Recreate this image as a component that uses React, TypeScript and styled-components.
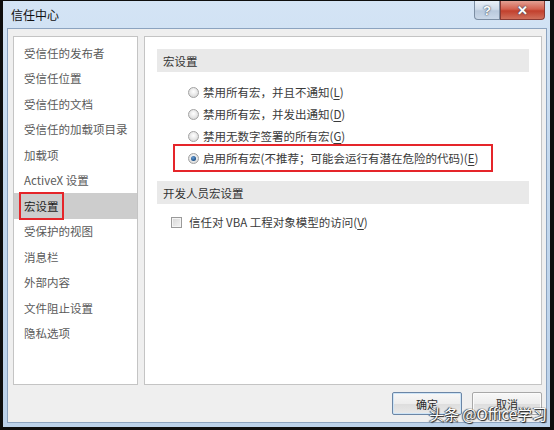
import React from "react";
import styled, { createGlobalStyle } from "styled-components";

const Global = createGlobalStyle`
  html, body {
    margin: 0;
    padding: 0;
    width: 554px;
    height: 430px;
    overflow: hidden;
    background: #111;
  }
  * { box-sizing: border-box; }
`;

const FONT = `"Noto Sans CJK SC", "Noto Sans", "Liberation Sans", sans-serif`;

const Window = styled.div`
  position: relative;
  width: 554px;
  height: 430px;
  display: flex;
  flex-direction: column;
  border-style: solid;
  border-color: #0e0e0e;
  border-width: 1px 4px 3px 3px;
  padding: 0 3px 4px 4px;
  background: linear-gradient(180deg, #d4e4f5 0%, #c3d8ee 40%, #bcd2ea 100%);
  font-family: ${FONT};
`;

const TitleBar = styled.div`
  height: 27px;
  display: flex;
  align-items: flex-start;
  justify-content: space-between;
  padding-left: 4px;
`;

const Title = styled.div`
  font-size: 12px;
  line-height: 27px;
  color: #111;
`;

const Caption = styled.div`
  display: flex;
  margin-right: 2px;
`;

const CapButton = styled.div<{ $close?: boolean }>`
  width: ${(p) => (p.$close ? 45 : 26)}px;
  height: 19px;
  display: flex;
  align-items: center;
  justify-content: center;
  border: 1px solid ${(p) => (p.$close ? "#8a3a33" : "#7c8ea3")};
  border-top: none;
  border-radius: ${(p) => (p.$close ? "0 0 4px 0" : "0 0 0 4px")};
  background: ${(p) =>
    p.$close
      ? "linear-gradient(180deg, #e3a093 0%, #d4614f 45%, #c2402d 55%, #d0705c 100%)"
      : "linear-gradient(180deg, #e9f0f8 0%, #cfdbe9 45%, #b9c9dc 55%, #cad8e8 100%)"};
  color: #fff;
  font-family: "Liberation Sans", sans-serif;
  font-weight: bold;
  font-size: 13px;
  text-shadow: 0 0 2px #3e4e62, 0 0 1px #3e4e62;
`;

const Body = styled.div`
  flex: 1;
  display: flex;
  flex-direction: column;
  border: 1px solid #8ca3bf;
  background: #efefef;
  padding: 7px 4px 0 5px;
`;

const Panels = styled.div`
  height: 349px;
  display: flex;
  gap: 6px;
`;

const NavPanel = styled.div`
  width: 125px;
  background: #fff;
  border: 1px solid #c4c4c4;
  padding-top: 3px;
`;

const NavItem = styled.div<{ $active?: boolean }>`
  height: 25.5px;
  display: flex;
  align-items: stretch;
  padding-left: 10px;
  font-size: 11.5px;
  color: ${(p) => (p.$active ? "#1e1e1e" : "#5a5a5a")};
  background: ${(p) => (p.$active ? "#cdcdcd" : "transparent")};
`;

const NavLabel = styled.span<{ $marked?: boolean }>`
  display: flex;
  align-items: center;
  padding: 0 4px;
  margin-left: -4px;
  outline: ${(p) => (p.$marked ? "2px solid #e5252a" : "none")};
  outline-offset: -1px;
`;

const ContentPanel = styled.div`
  flex: 1;
  background: #fff;
  border: 1px solid #c4c4c4;
  padding: 12px 12px 0 12px;
`;

const SectionHead = styled.div`
  height: 23px;
  display: flex;
  align-items: center;
  padding-left: 6px;
  background: #e9e9e9;
  font-size: 11.5px;
  color: #333;
`;

const OptionList = styled.div`
  display: flex;
  flex-direction: column;
  padding: 9px 0 12px 19px;
`;

const OptionRow = styled.div<{ $marked?: boolean }>`
  width: fit-content;
  height: 22px;
  display: flex;
  align-items: center;
  gap: 4px;
  padding: 0 12px 0 12px;
  font-size: 11.5px;
  color: #3a3a3a;
  outline: ${(p) => (p.$marked ? "2px solid #e5252a" : "none")};
  outline-offset: 1px;
`;

const Radio = styled.span<{ $on?: boolean }>`
  width: 11px;
  height: 11px;
  border-radius: 50%;
  border: 1px solid #a2a2a2;
  background: radial-gradient(circle at 50% 40%, #ffffff 0%, #e3e3e3 60%, #c9c9c9 100%);
  display: flex;
  align-items: center;
  justify-content: center;
  flex: none;
  &::after {
    content: "";
    display: ${(p) => (p.$on ? "block" : "none")};
    width: 5px;
    height: 5px;
    border-radius: 50%;
    background: radial-gradient(circle at 40% 35%, #6aa0d6 0%, #1c4f86 70%, #0f2f55 100%);
  }
`;

const CheckRow = styled.div`
  height: 20px;
  margin-top: 8px;
  display: flex;
  align-items: center;
  gap: 7px;
  padding-left: 14px;
  font-size: 11.5px;
  color: #3a3a3a;
`;

const Check = styled.span`
  width: 11px;
  height: 11px;
  border: 1px solid #9a9a9a;
  background: linear-gradient(135deg, #d6d6d6 0%, #f3f3f3 100%);
  box-shadow: inset 0 0 0 1px #f4f4f4;
  flex: none;
`;

const Key = styled.u`
  text-underline-offset: 2px;
`;

const Footer = styled.div`
  flex: 1;
  display: flex;
  justify-content: flex-end;
  align-items: flex-start;
  gap: 10px;
  padding-top: 7px;
`;

const Button = styled.div<{ $default?: boolean }>`
  width: 70px;
  height: 23px;
  display: flex;
  align-items: center;
  justify-content: center;
  border: 1px solid ${(p) => (p.$default ? "#6b86a6" : "#a8a8a8")};
  border-radius: 2px;
  background: linear-gradient(180deg, #f8f8f8 0%, #ededed 50%, #dddddd 51%, #e9e9e9 100%);
  box-shadow: ${(p) => (p.$default ? "inset 0 0 0 1px #cde4f7" : "inset 0 0 0 1px #fbfbfb")};
  font-size: 11px;
  color: #2a2a2a;
`;

const Watermark = styled.div`
  position: absolute;
  left: 426px;
  top: 402px;
  font-size: 15px;
  color: #fdfdfd;
  font-family: ${FONT};
  text-shadow: 0 0 1px #2a2a2a, 1px 1px 1px #1a1a1a, -1px 0 1px #444;
  white-space: nowrap;
  pointer-events: none;
`;

const navItems = [
  "受信任的发布者",
  "受信任位置",
  "受信任的文档",
  "受信任的加载项目录",
  "加载项",
  "ActiveX 设置",
  "宏设置",
  "受保护的视图",
  "消息栏",
  "外部内容",
  "文件阻止设置",
  "隐私选项",
];

const macroOptions: { text: string; key: string; on?: boolean }[] = [
  { text: "禁用所有宏，并且不通知", key: "L" },
  { text: "禁用所有宏，并发出通知", key: "D" },
  { text: "禁用无数字签署的所有宏", key: "G" },
  { text: "启用所有宏(不推荐；可能会运行有潜在危险的代码)", key: "E", on: true },
];

export default function App() {
  return (
    <>
      <Global />
      <Window>
        <TitleBar>
          <Title>信任中心</Title>
          <Caption>
            <CapButton>?</CapButton>
            <CapButton $close>✕</CapButton>
          </Caption>
        </TitleBar>
        <Body>
          <Panels>
            <NavPanel>
              {navItems.map((label) => {
                const active = label === "宏设置";
                return (
                  <NavItem key={label} $active={active}>
                    <NavLabel $marked={active}>{label}</NavLabel>
                  </NavItem>
                );
              })}
            </NavPanel>
            <ContentPanel>
              <SectionHead>宏设置</SectionHead>
              <OptionList>
                {macroOptions.map((o) => (
                  <OptionRow key={o.key} $marked={o.on}>
                    <Radio $on={o.on} />
                    <span>
                      {o.text}(<Key>{o.key}</Key>)
                    </span>
                  </OptionRow>
                ))}
              </OptionList>
              <SectionHead>开发人员宏设置</SectionHead>
              <CheckRow>
                <Check />
                <span>
                  信任对 VBA 工程对象模型的访问(<Key>V</Key>)
                </span>
              </CheckRow>
            </ContentPanel>
          </Panels>
          <Footer>
            <Button $default>确定</Button>
            <Button>取消</Button>
          </Footer>
        </Body>
        <Watermark>头条 @Office学习</Watermark>
      </Window>
    </>
  );
}
